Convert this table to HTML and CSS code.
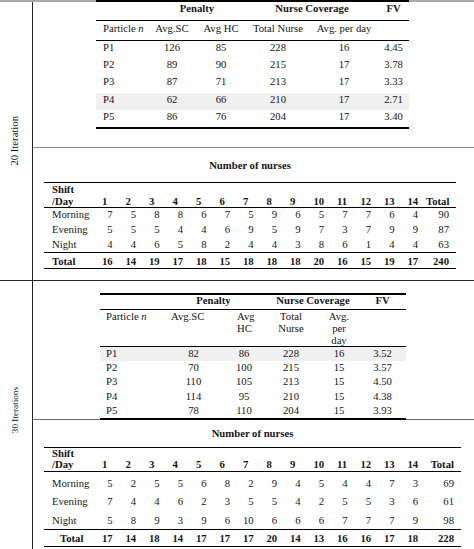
FILE: index.html
```html
<!DOCTYPE html>
<html lang="en">
<head>
<meta charset="utf-8">
<title>Iteration results</title>
<link rel="stylesheet" href="styles.css">
</head>
<body>
<div class="sheet">
  <section class="block block-20">
    <div class="label label-20"><span class="label-text">20 Iteration</span></div>
    <div class="content">
      <div class="part part-pen part-pen-20">
        <div class="pen pen-20">
          <div class="row grp"><div></div><div class="span2">Penalty</div><div class="span2">Nurse Coverage</div><div>FV</div></div>
          <div class="row head"><div class="first">Particle <i>n</i></div><div>Avg.SC</div><div>Avg HC</div><div>Total Nurse</div><div>Avg. per day</div><div></div></div>
          <div class="row data"><div class="first">P1</div><div>126</div><div>85</div><div>228</div><div>16</div><div>4.45</div></div>
          <div class="row data"><div class="first">P2</div><div>89</div><div>90</div><div>215</div><div>17</div><div>3.78</div></div>
          <div class="row data"><div class="first">P3</div><div>87</div><div>71</div><div>213</div><div>17</div><div>3.33</div></div>
          <div class="row data shade"><div class="first">P4</div><div>62</div><div>66</div><div>210</div><div>17</div><div>2.71</div></div>
          <div class="row data"><div class="first">P5</div><div>86</div><div>76</div><div>204</div><div>17</div><div>3.40</div></div>
        </div>
      </div>
      <div class="part part-nurse part-nurse-20">
        <div class="nt nt-20">
          <div class="nt-title">Number of nurses</div>
          <div class="nrow nhead"><div class="c0">Shift<br>/Day</div><div class="d">1</div><div class="d">2</div><div class="d">3</div><div class="d">4</div><div class="d">5</div><div class="d">6</div><div class="d">7</div><div class="d">8</div><div class="d">9</div><div class="d">10</div><div class="d">11</div><div class="d">12</div><div class="d">13</div><div class="d">14</div><div class="t">Total</div></div>
          <div class="nrow ndata"><div class="c0">Morning</div><div class="d">7</div><div class="d">5</div><div class="d">8</div><div class="d">8</div><div class="d">6</div><div class="d">7</div><div class="d">5</div><div class="d">9</div><div class="d">6</div><div class="d">5</div><div class="d">7</div><div class="d">7</div><div class="d">6</div><div class="d">4</div><div class="t">90</div></div>
          <div class="nrow ndata"><div class="c0">Evening</div><div class="d">5</div><div class="d">5</div><div class="d">5</div><div class="d">4</div><div class="d">4</div><div class="d">6</div><div class="d">9</div><div class="d">5</div><div class="d">9</div><div class="d">7</div><div class="d">3</div><div class="d">7</div><div class="d">9</div><div class="d">9</div><div class="t">87</div></div>
          <div class="nrow ndata last"><div class="c0">Night</div><div class="d">4</div><div class="d">4</div><div class="d">6</div><div class="d">5</div><div class="d">8</div><div class="d">2</div><div class="d">4</div><div class="d">4</div><div class="d">3</div><div class="d">8</div><div class="d">6</div><div class="d">1</div><div class="d">4</div><div class="d">4</div><div class="t">63</div></div>
          <div class="nrow ntotal"><div class="c0">Total</div><div class="d">16</div><div class="d">14</div><div class="d">19</div><div class="d">17</div><div class="d">18</div><div class="d">15</div><div class="d">18</div><div class="d">18</div><div class="d">18</div><div class="d">20</div><div class="d">16</div><div class="d">15</div><div class="d">19</div><div class="d">17</div><div class="t">240</div></div>
        </div>
      </div>
    </div>
  </section>

  <section class="block block-30">
    <div class="label label-30"><span class="label-text">30 Iterations</span></div>
    <div class="content">
      <div class="part part-pen part-pen-30">
        <div class="pen pen-30">
          <div class="row grp"><div></div><div class="span2">Penalty</div><div class="span2">Nurse Coverage</div><div>FV</div></div>
          <div class="row head"><div class="first">Particle <i>n</i></div><div class="c2">Avg.SC</div><div class="c3">Avg<br>HC</div><div>Total<br>Nurse</div><div class="c5">Avg.<br>per<br>day</div><div></div></div>
          <div class="row data shade"><div class="first">P1</div><div>82</div><div class="c3">86</div><div>228</div><div class="c5">16</div><div>3.52</div></div>
          <div class="row data"><div class="first">P2</div><div>70</div><div class="c3">100</div><div>215</div><div class="c5">15</div><div>3.57</div></div>
          <div class="row data"><div class="first">P3</div><div>110</div><div class="c3">105</div><div>213</div><div class="c5">15</div><div>4.50</div></div>
          <div class="row data"><div class="first">P4</div><div>114</div><div class="c3">95</div><div>210</div><div class="c5">15</div><div>4.38</div></div>
          <div class="row data"><div class="first">P5</div><div>78</div><div class="c3">110</div><div>204</div><div class="c5">15</div><div>3.93</div></div>
        </div>
      </div>
      <div class="part part-nurse part-nurse-30">
        <div class="nt nt-30">
          <div class="nt-title">Number of nurses</div>
          <div class="nrow nhead"><div class="c0">Shift<br>/Day</div><div class="d">1</div><div class="d">2</div><div class="d">3</div><div class="d">4</div><div class="d">5</div><div class="d">6</div><div class="d">7</div><div class="d">8</div><div class="d">9</div><div class="d">10</div><div class="d">11</div><div class="d">12</div><div class="d">13</div><div class="d">14</div><div class="t">Total</div></div>
          <div class="nrow ndata"><div class="c0">Morning</div><div class="d">5</div><div class="d">2</div><div class="d">5</div><div class="d">5</div><div class="d">6</div><div class="d">8</div><div class="d">2</div><div class="d">9</div><div class="d">4</div><div class="d">5</div><div class="d">4</div><div class="d">4</div><div class="d">7</div><div class="d">3</div><div class="t">69</div></div>
          <div class="nrow ndata"><div class="c0">Evening</div><div class="d">7</div><div class="d">4</div><div class="d">4</div><div class="d">6</div><div class="d">2</div><div class="d">3</div><div class="d">5</div><div class="d">5</div><div class="d">4</div><div class="d">2</div><div class="d">5</div><div class="d">5</div><div class="d">3</div><div class="d">6</div><div class="t">61</div></div>
          <div class="nrow ndata last"><div class="c0">Night</div><div class="d">5</div><div class="d">8</div><div class="d">9</div><div class="d">3</div><div class="d">9</div><div class="d">6</div><div class="d">10</div><div class="d">6</div><div class="d">6</div><div class="d">6</div><div class="d">7</div><div class="d">7</div><div class="d">7</div><div class="d">9</div><div class="t">98</div></div>
          <div class="nrow ntotal"><div class="c0">Total</div><div class="d">17</div><div class="d">14</div><div class="d">18</div><div class="d">14</div><div class="d">17</div><div class="d">17</div><div class="d">17</div><div class="d">20</div><div class="d">14</div><div class="d">13</div><div class="d">16</div><div class="d">16</div><div class="d">17</div><div class="d">18</div><div class="t">228</div></div>
        </div>
      </div>
    </div>
  </section>
</div>
</body>
</html>
```

FILE: styles.css
```css
* {
  box-sizing: border-box;
  margin: 0;
  padding: 0;
}

html, body {
  background: #ffffff;
}

body {
  margin: 0;
  width: 474px;
  height: 549px;
  overflow: hidden;
  font-family: "Liberation Serif", "Times New Roman", serif;
  font-size: 10.7px;
  color: #161616;
}

.sheet {
  width: 474px;
  border-top: 2px solid #aaaaaa;
}

/* ---------- sections ---------- */
.block {
  display: flex;
}

.block-20 {
  border-bottom: 1px solid #2a2a2a;
}

.label {
  width: 33px;
  flex: 0 0 33px;
  border-right: 1px solid #222222;
  display: flex;
  align-items: center;
  justify-content: center;
}

.label-20 {
  padding-right: 4px;
}

.label-30 {
  padding-right: 2px;
  padding-bottom: 16px;
}

.label-text {
  writing-mode: vertical-rl;
  transform: rotate(180deg);
  white-space: nowrap;
  line-height: 12px;
}

.label-30 .label-text {
  font-size: 9.2px;
}

.content {
  flex: 1 1 auto;
  min-width: 0;
}

/* ---------- parts ---------- */
.part-pen-20 {
  padding-bottom: 18px;
  border-bottom: 1px solid #8c8c8c;
}

.part-nurse-20 {
  padding-top: 9.7px;
  padding-bottom: 11px;
}

.part-pen-30 {
  padding-top: 12px;
  border-bottom: 1px solid #6a6a6a;
}

.part-nurse-30 {
  padding-top: 5.75px;
  padding-bottom: 8px;
}

/* ---------- penalty tables ---------- */
.pen {
  border-top: 2px solid #000000;
  border-bottom: 2px solid #000000;
}

.pen .row {
  display: grid;
  text-align: center;
  white-space: nowrap;
}

.pen .span2 {
  grid-column: span 2;
}

.pen .grp {
  font-weight: bold;
  border-bottom: 1px solid #000000;
}

.pen .head {
  border-bottom: 1px solid #000000;
}

.pen .first {
  text-align: left;
}

.pen .shade {
  background: #f0f0f0;
}

.pen-20 {
  width: 313px;
  margin-left: 63px;
  margin-top: -2px;
}

.pen-20 .row {
  grid-template-columns: 52px 48px 50px 64px 68px 31px;
}

.pen-20 .grp {
  line-height: 13.4px;
  padding-bottom: 4.6px;
}

.pen-20 .head {
  line-height: 14.8px;
  padding-bottom: 4.2px;
}

.pen-20 .data {
  line-height: 13px;
  padding-bottom: 4.2px;
}

.pen-20 .first {
  padding-left: 7px;
}

.pen-30 {
  width: 306px;
  margin-left: 67px;
  margin-bottom: -1px;
}

.pen-30 .row {
  grid-template-columns: 60px 67px 40px 48px 44px 47px;
}

.pen-30 .grp {
  line-height: 10px;
  padding-bottom: 4px;
}

.pen-30 .head {
  line-height: 12px;
}

.pen-30 .data {
  line-height: 13px;
  padding-bottom: 1.25px;
}

.pen-30 .first {
  padding-left: 6px;
}

.pen-30 .head .c2 {
  text-align: left;
  padding-left: 11px;
}

.pen-30 .head .c3 {
  text-align: left;
  padding-left: 10px;
}

.pen-30 .data .c3 {
  padding-right: 6px;
}

.pen-30 .c5 {
  padding-left: 4px;
}

/* ---------- nurse tables ---------- */
.nt {
  margin-left: 11px;
}

.nt-title {
  font-weight: bold;
  text-align: center;
  line-height: 14px;
}

.nt-20 {
  width: 412px;
}

.nt-30 {
  width: 417px;
}

.nt-20 .nt-title {
  margin-bottom: 10.3px;
}

.nt-30 .nt-title {
  margin-bottom: 7px;
}

.nrow {
  display: grid;
  align-items: end;
  white-space: nowrap;
}

.nt-20 .nrow {
  grid-template-columns: 53px repeat(14, 23.5px) 30px;
}

.nt-30 .nrow {
  grid-template-columns: 53px repeat(14, 23.5px) 35px;
}

.nrow .c0 {
  padding-left: 8px;
  text-align: left;
}

.nrow .d {
  padding: 0 8px 0 5px;
  text-align: right;
}

.nrow .t {
  padding-right: 7px;
  text-align: right;
}

.nhead {
  font-weight: bold;
  border-top: 1px solid #000000;
  border-bottom: 1px solid #000000;
}

.nhead .d {
  text-align: left;
}

.ndata.last {
  border-bottom: 1px solid #000000;
}

.ntotal {
  font-weight: bold;
  border-bottom: 1px solid #000000;
}

/* 20 iteration rows */
.nt-20 .nhead {
  line-height: 12px;
}

.nt-20 .ndata {
  line-height: 12px;
  padding-bottom: 3px;
}

.nt-20 .ndata.last {
  padding-bottom: 2px;
}

.nt-20 .ntotal {
  line-height: 14px;
  padding-top: 1px;
}

/* 30 iteration rows */
.nt-30 .nhead {
  line-height: 11.5px;
}

.nt-30 .ndata {
  line-height: 13px;
  padding-top: 5.2px;
  padding-bottom: 0.15px;
}

.nt-30 .ndata.last {
  padding-bottom: 2.15px;
}

.nt-30 .ntotal {
  line-height: 13px;
  padding-top: 2.6px;
  padding-bottom: 0.4px;
}

.nt-30 .ntotal .c0 {
  padding-left: 16px;
}
```
